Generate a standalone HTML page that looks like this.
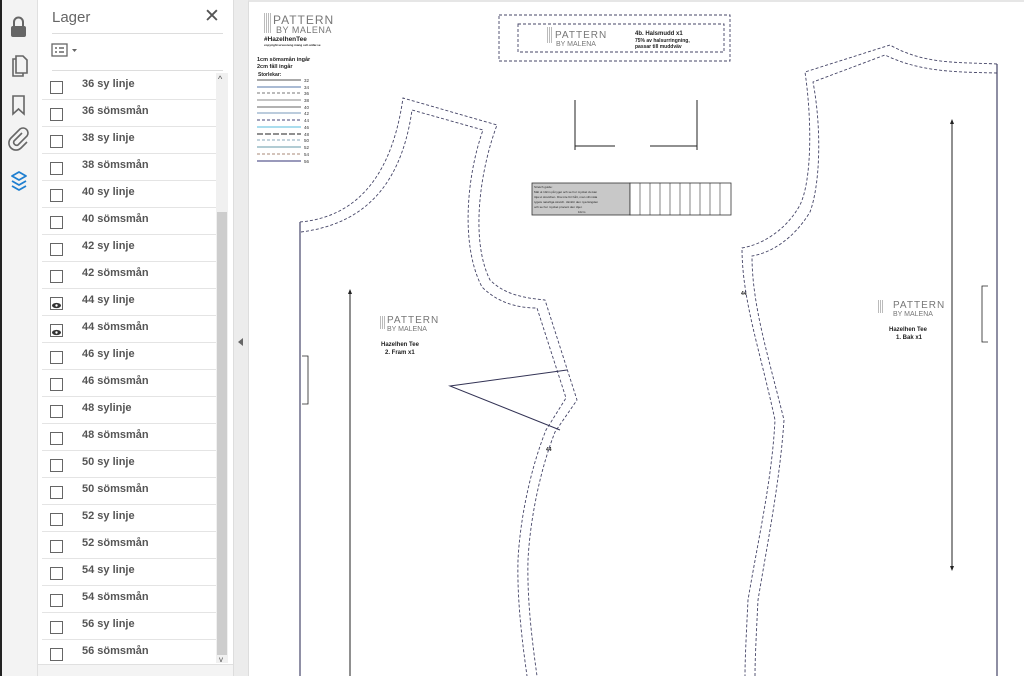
<!DOCTYPE html>
<html><head><meta charset="utf-8"><style>
*{margin:0;padding:0;box-sizing:border-box}
body{width:1024px;height:676px;overflow:hidden;background:#fff;font-family:"Liberation Sans",sans-serif;position:relative}
#bar{position:absolute;left:0;top:0;width:38px;height:676px;background:#f3f3f3;border-left:2px solid #222;border-right:1px solid #e0e0e0}
#panel{position:absolute;left:38px;top:0;width:195px;height:676px;background:#fff}
#strip{position:absolute;left:233px;top:0;width:15px;height:676px;background:#ececec;border-left:1px solid #ddd}
#doc{position:absolute;left:248px;top:0;width:776px;height:676px;background:#fff;border-top:2px solid #e6e6e6;border-left:1px solid #ddd}
.row{position:absolute;left:0;width:178px;height:27px;border-bottom:1px solid #e4e4e4}
.cb{position:absolute;left:8px;top:8px;width:13px;height:13px;border:1px solid #666;background:#fff}
.lbl{position:absolute;left:40px;top:5px;font-size:11px;font-weight:bold;color:#555}
</style></head><body>
<div id="bar">
<svg width="38" height="200" style="position:absolute;left:-2px;top:0">
<rect x="11" y="26" width="15" height="11" rx="2" fill="#666"/><path d="M14 26v-4a4.5 4.5 0 0 1 9 0v4" stroke="#666" stroke-width="2" fill="none"/>
<path d="M16 59h-3v17h10v-3" stroke="#666" stroke-width="1.6" fill="none"/><path d="M16 56h7l4 4v13h-11z" stroke="#666" stroke-width="1.6" fill="#f3f3f3"/>
<path d="M13 96h11v18l-5.5-5-5.5 5z" stroke="#666" stroke-width="1.6" fill="none"/>
<path d="M22 133l-8 8a3 3 0 0 0 4 4l9-9a5 5 0 0 0-7-7l-9 9a7 7 0 0 0 10 10l6-6" stroke="#666" stroke-width="1.6" fill="none"/>
<path d="M19 172l-7 4 7 4 7-4z M12 181l7 4 7-4 M12 186l7 4 7-4" stroke="#1f7fd0" stroke-width="1.8" fill="none" stroke-linejoin="round"/>
</svg>
</div>
<div id="panel">
<div style="position:absolute;left:14px;top:9px;font-size:15px;color:#666">Lager</div>
<div style="position:absolute;left:166px;top:5px;font-size:19px;color:#555">✕</div>
<div style="position:absolute;left:14px;top:33px;width:171px;height:1px;background:#ddd"></div>
<svg width="40" height="20" style="position:absolute;left:13px;top:42px"><rect x="1" y="2" width="15" height="12" stroke="#666" fill="none" stroke-width="1.3"/><path d="M4 6h2M8 6h5M4 10h2M8 10h5" stroke="#666" stroke-width="1.4"/><path d="M21 7h5l-2.5 3z" fill="#666"/></svg>
<div style="position:absolute;left:14px;top:70px;width:171px;height:1px;background:#ddd"></div>
<div style="position:absolute;left:4px;top:73px;width:176px;height:590px;overflow:hidden">
<div class="row" style="top:0"><div class="cb"></div><div class="lbl">36 sy linje</div></div>
<div class="row" style="top:27px"><div class="cb"></div><div class="lbl">36 sömsmån</div></div>
<div class="row" style="top:54px"><div class="cb"></div><div class="lbl">38 sy linje</div></div>
<div class="row" style="top:81px"><div class="cb"></div><div class="lbl">38 sömsmån</div></div>
<div class="row" style="top:108px"><div class="cb"></div><div class="lbl">40 sy linje</div></div>
<div class="row" style="top:135px"><div class="cb"></div><div class="lbl">40 sömsmån</div></div>
<div class="row" style="top:162px"><div class="cb"></div><div class="lbl">42 sy linje</div></div>
<div class="row" style="top:189px"><div class="cb"></div><div class="lbl">42 sömsmån</div></div>
<div class="row" style="top:216px"><div class="cb"><svg width="11" height="11"><ellipse cx="5.5" cy="5.5" rx="4.5" ry="2.6" fill="#333"/><circle cx="5.5" cy="5.5" r="1.2" fill="#fff"/></svg></div><div class="lbl">44 sy linje</div></div>
<div class="row" style="top:243px"><div class="cb"><svg width="11" height="11"><ellipse cx="5.5" cy="5.5" rx="4.5" ry="2.6" fill="#333"/><circle cx="5.5" cy="5.5" r="1.2" fill="#fff"/></svg></div><div class="lbl">44 sömsmån</div></div>
<div class="row" style="top:270px"><div class="cb"></div><div class="lbl">46 sy linje</div></div>
<div class="row" style="top:297px"><div class="cb"></div><div class="lbl">46 sömsmån</div></div>
<div class="row" style="top:324px"><div class="cb"></div><div class="lbl">48 sylinje</div></div>
<div class="row" style="top:351px"><div class="cb"></div><div class="lbl">48 sömsmån</div></div>
<div class="row" style="top:378px"><div class="cb"></div><div class="lbl">50 sy linje</div></div>
<div class="row" style="top:405px"><div class="cb"></div><div class="lbl">50 sömsmån</div></div>
<div class="row" style="top:432px"><div class="cb"></div><div class="lbl">52 sy linje</div></div>
<div class="row" style="top:459px"><div class="cb"></div><div class="lbl">52 sömsmån</div></div>
<div class="row" style="top:486px"><div class="cb"></div><div class="lbl">54 sy linje</div></div>
<div class="row" style="top:513px"><div class="cb"></div><div class="lbl">54 sömsmån</div></div>
<div class="row" style="top:540px"><div class="cb"></div><div class="lbl">56 sy linje</div></div>
<div class="row" style="top:567px"><div class="cb"></div><div class="lbl">56 sömsmån</div></div>
</div>
<div style="position:absolute;left:178px;top:73px;width:12px;height:590px;background:#f0f0f0"></div>
<div style="position:absolute;left:179px;top:212px;width:10px;height:443px;background:#cdcdcd"></div>
<div style="position:absolute;left:180px;top:74px;font-size:9px;color:#555">^</div>
<div style="position:absolute;left:181px;top:655px;font-size:8px;color:#555">v</div>
<div style="position:absolute;left:0;top:664px;width:195px;height:12px;background:#f4f4f4;border-top:1px solid #e0e0e0"></div>
</div>
<div id="strip"><div style="position:absolute;left:4px;top:338px;width:0;height:0;border-top:4px solid transparent;border-bottom:4px solid transparent;border-right:5px solid #666"></div></div>
<div id="doc"></div>
<svg width="1024" height="676" style="position:absolute;left:0;top:0" font-family="Liberation Sans, sans-serif">
<g fill="#bbb"><rect x="264" y="13" width="1" height="20"/><rect x="266" y="13" width="1" height="20"/><rect x="268" y="13" width="1" height="20"/><rect x="270" y="13" width="1" height="20"/>
<rect x="547" y="27" width="1" height="16"/><rect x="549" y="27" width="1" height="16"/><rect x="551" y="27" width="1" height="16"/>
<rect x="380" y="316" width="1" height="13"/><rect x="382" y="316" width="1" height="13"/><rect x="384" y="316" width="1" height="13"/>
<rect x="878" y="300" width="1" height="13"/><rect x="880" y="300" width="1" height="13"/><rect x="882" y="300" width="1" height="13"/></g>
<g fill="#777"><text x="273" y="24" font-size="12" letter-spacing="1">PATTERN</text><text x="276" y="33" font-size="9" letter-spacing=".5">BY MALENA</text>
<text x="555" y="38" font-size="10" letter-spacing="1">PATTERN</text><text x="556" y="46" font-size="7">BY MALENA</text>
<text x="387" y="323" font-size="10" letter-spacing="1">PATTERN</text><text x="387" y="331" font-size="7">BY MALENA</text>
<text x="893" y="308" font-size="10" letter-spacing="1">PATTERN</text><text x="893" y="316" font-size="7">BY MALENA</text></g>
<g fill="#222" font-weight="bold"><text x="264" y="41" font-size="6.5">#HazelhenTee</text><text x="264" y="46" font-size="3">copyright ursuoreng mang och anfar.se</text>
<text x="257" y="61" font-size="5.5">1cm sömsmån ingår</text><text x="257" y="68" font-size="5.5">2cm fåll ingår</text><text x="258" y="76" font-size="5">Storlekar:</text>
<text x="635" y="35" font-size="6">4b. Halsmudd x1</text><text x="635" y="42" font-size="5">75% av halsurringning,</text><text x="635" y="48" font-size="5">passar till muddväv</text>
<text x="381" y="346" font-size="6">Hazelhen Tee</text><text x="385" y="354" font-size="6">2. Fram x1</text>
<text x="889" y="331" font-size="6">Hazelhen Tee</text><text x="896" y="339" font-size="6">1. Bak x1</text>
<text x="546" y="451" font-size="5">44</text><text x="741" y="295" font-size="5">44</text></g>
<g stroke-width="1">
<path d="M257 80h44" stroke="#555"/><path d="M257 87h44" stroke="#57a"/><path d="M257 93h44" stroke="#777" stroke-dasharray="3 2"/><path d="M257 100h44" stroke="#888"/><path d="M257 107h44" stroke="#666"/><path d="M257 113h44" stroke="#79b"/><path d="M257 120h44" stroke="#447" stroke-dasharray="3 2"/><path d="M257 127h44" stroke="#5bd"/><path d="M257 134h44" stroke="#222" stroke-dasharray="6 2"/><path d="M257 140h44" stroke="#8ab" stroke-dasharray="3 2"/><path d="M257 147h44" stroke="#69a"/><path d="M257 154h44" stroke="#a87" stroke-dasharray="3 2"/><path d="M257 161h44" stroke="#99b" stroke-width="2"/></g>
<g font-size="4.5" fill="#333"><text x="304" y="82">32</text><text x="304" y="89">34</text><text x="304" y="95">36</text><text x="304" y="102">38</text><text x="304" y="109">40</text><text x="304" y="115">42</text><text x="304" y="122">44</text><text x="304" y="129">46</text><text x="304" y="136">48</text><text x="304" y="142">50</text><text x="304" y="149">52</text><text x="304" y="156">54</text><text x="304" y="163">56</text></g>
<g fill="none" stroke="#446" stroke-width="0.9" stroke-dasharray="3 2">
<rect x="499" y="15" width="231" height="46"/><rect x="518" y="24" width="206" height="28"/>
<path d="M300 222C345 218 390 190 403 98L497 125C480 170 470 240 490 280C505 295 525 298 545 300L577 400L555 432C540 470 530 520 528 560C527 600 532 640 537 676"/>
<path d="M301 232C355 225 400 195 412 110L483 130C467 175 460 245 482 287C500 305 522 308 537 308L566 398L546 430C530 470 520 520 518 560C517 600 522 640 527 676"/>
<path d="M997 64C960 62 925 65 890 45L805 72C812 120 812 180 800 205C785 232 760 245 742 248C742 300 760 350 775 420C772 480 758 540 748 600C746 640 745 660 745 676"/>
<path d="M997 73C955 72 920 72 885 55L813 82C822 130 820 185 810 212C793 240 770 253 752 256C752 305 768 355 784 420C780 480 768 540 758 600C756 640 755 660 755 676"/>
</g>
<path d="M300 222V676" stroke="#557" stroke-width="1.3"/>
<path d="M997 64V676" stroke="#446" stroke-width="1.2"/>
<path d="M567 370L450 386L560 430" stroke="#335" stroke-width="1" fill="none"/>
<path d="M350 290V676M952 120V570" stroke="#222" stroke-width="1"/>
<path d="M348 294l2-5 2 5zM950 124l2-5 2 5zM950 566l2 5 2-5z" fill="#222"/>
<path d="M302 356h6v48h-6M988 286h-6v56h6" stroke="#222" fill="none" stroke-width=".8"/>
<path d="M575 100v50M575 146h40M697 100v50M650 146h47" stroke="#222" stroke-width="1" fill="none"/>
<rect x="532" y="183" width="98" height="32" fill="#c8c8c8" stroke="#333" stroke-width=".8"/>
<rect x="630" y="183" width="101" height="32" fill="#fff" stroke="#333" stroke-width=".8"/>
<g stroke="#333" stroke-width=".6"><path d="M640 183v32M650 183v32M660 183v32M670 183v32M680 183v32M690 183v32M700 183v32M710 183v32M720 183v32"/></g>
<g font-size="3" fill="#222"><text x="534" y="188">Stretch guide:</text><text x="534" y="193">Mät ut 10cm på tyget och se hur mycket du kan</text><text x="534" y="198">töja ut stretchen. Dra inte för hårt, man vill mäta</text><text x="534" y="203">tygets naturliga stretch. Jämför den nya längden</text><text x="534" y="208">och se hur mycket procent den töjer.</text><text x="578" y="213">10cm</text></g>
</svg>
</body></html>
